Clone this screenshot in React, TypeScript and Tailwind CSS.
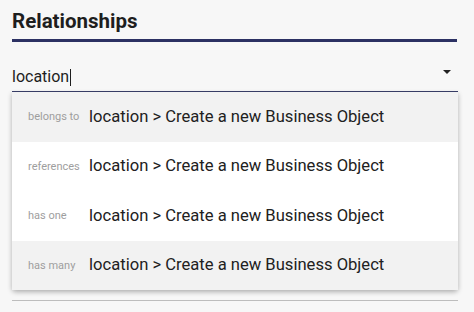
import { useState } from 'react';

const OPTIONS = ['belongs to', 'references', 'has one', 'has many'];

export default function App() {
  const [value] = useState('location');

  return (
    <div className="w-[474px] h-[312px] bg-[#f7f7f7] font-['Roboto',sans-serif] px-3 pt-[8px]">
      <h2 className="text-[20.5px] font-bold leading-[26px] text-[#1e1e1e]">Relationships</h2>
      <div className="mt-[5px] h-[3px] w-[445px] bg-[#2c3163]" />

      <div className="relative mt-[22px] w-[446px]">
        <div className="flex items-center h-[26px] text-[16px] text-[#1e1e1e]">
          <span>{value}</span>
          <span className="ml-px w-px h-[17px] bg-[#1e1e1e]" />
          <span className="ml-auto mr-[7px] mb-[10px] w-0 h-0 border-x-[4px] border-x-transparent border-t-[4px] border-t-[#222]" />
        </div>
        <div className="mt-px h-px bg-[#3a3f6a]" />

        <ul className="bg-white rounded-b shadow-[0_2px_5px_rgba(0,0,0,0.3)]">
          {OPTIONS.map((label, i) => (
            <li
              key={label}
              className={`flex items-center h-[49.5px] pl-[16px] pt-px ${i === 0 || i === 3 ? 'bg-[#f2f2f2]' : 'bg-white'}`}
            >
              <span className="w-[61px] text-[11px] text-[#9e9e9e]">{label}</span>
              <span className="text-[16.6px] text-[#212121]">location &gt; Create a new Business Object</span>
            </li>
          ))}
        </ul>
        <div className="mt-[10px] h-px bg-[#bdbdbd]" />
      </div>
    </div>
  );
}
